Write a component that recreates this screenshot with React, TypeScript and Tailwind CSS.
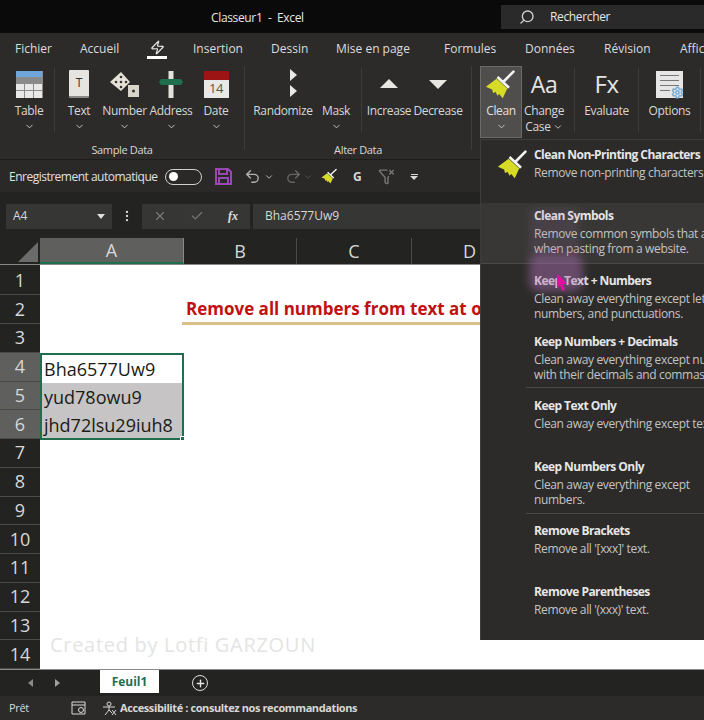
import type { ReactNode } from "react"
import { Search, ChevronDown, Undo2, Redo2, X, Check, Plus, MoreVertical, Zap, FilterX, Settings } from "lucide-react"

const tabs = [
  { label: "Fichier", w: "w-[65px]" },
  { label: "Accueil", w: "w-[67px]" },
]

const tabsAfter = [
  { label: "Insertion", w: "w-[78px]" },
  { label: "Dessin", w: "w-[65px]" },
  { label: "Mise en page", w: "w-[108px]" },
  { label: "Formules", w: "w-[81px]" },
  { label: "Données", w: "w-[79px]" },
  { label: "Révision", w: "w-[76px]" },
  { label: "Affichage", w: "w-[70px]" },
]

function Broom({ size = 36 }: { size?: number }) {
  return (
    <svg width={size} height={size} viewBox="0 0 36 36">
      <path d="M21 14 L32 3" stroke="#f2f2f2" strokeWidth="3" strokeLinecap="round" />
      <path d="M14 9 L27 21" stroke="#f2f2f2" strokeWidth="3" />
      <path d="M13 11 L25 22 L20 33 L16 28 L14 30 L12 26 L9 27 L8 23 L1 20 Z" fill="#d6dc26" />
    </svg>
  )
}

function RibbonItem({ label, icon, w, chevron = true }: { label: string; icon: ReactNode; w: string; chevron?: boolean }) {
  return (
    <div className={`flex flex-col items-center shrink-0 ${w}`}>
      <div className="h-[36px] flex items-center justify-center">{icon}</div>
      <div className="mt-px text-[12px] leading-[16px] text-[#d8d8d8] whitespace-nowrap">{label}</div>
      {chevron && <ChevronDown size={11} strokeWidth={2} className="mt-[2px] text-[#cfcfcf]" />}
    </div>
  )
}

function MenuEntry({ title, lines }: { title: string; lines: string[] }) {
  return (
    <div className="pl-[53px] whitespace-nowrap">
      <div className="text-[12px] leading-[16px] font-bold tracking-[-0.55px] text-[#e6e6e6]">{title}</div>
      <div className="mt-[2px]">
        {lines.map((l) => (
          <div key={l} className="text-[12px] leading-[15px] text-[#c4c4c4]">{l}</div>
        ))}
      </div>
    </div>
  )
}

export default function App() {
  const rows = [1, 2, 3, 4, 5, 6, 7, 8, 9, 10, 11, 12, 13, 14]
  return (
    <div className="w-[704px] h-[720px] overflow-hidden relative flex flex-col bg-[#2c2b2a] tracking-[-0.35px] font-['Open_Sans','Noto_Sans',sans-serif]">
      {/* title bar */}
      <div className="h-[33px] bg-[#0a0a0a] flex shrink-0 text-[12px] text-[#e6e6e6]">
        <div className="ml-[211px] w-[290px] leading-[35px]">Classeur1&nbsp; -&nbsp; Excel</div>
        <div className="mt-[5px] h-[24px] flex-1 bg-[#2a2a2a] flex items-center">
          <Search size={16} className="ml-[18px] -scale-x-100 text-[#d0d0d0]" />
          <span className="ml-[15px]">Rechercher</span>
        </div>
      </div>

      {/* tabs */}
      <div className="h-[32px] pl-[15px] flex items-center text-[12px] tracking-normal text-[#dcdcdc] whitespace-nowrap shrink-0">
        {tabs.map((t) => (
          <div key={t.label} className={`shrink-0 ${t.w}`}>{t.label}</div>
        ))}
        <div className="w-[46px] shrink-0">
          <div className="w-[20px] flex flex-col items-center">
            <Zap size={15} className="text-[#e8e8e8]" />
            <div className="w-[20px] h-[3px] bg-white mt-px" />
          </div>
        </div>
        {tabsAfter.map((t) => (
          <div key={t.label} className={`shrink-0 ${t.w}`}>{t.label}</div>
        ))}
      </div>

      {/* ribbon */}
      <div className="h-[94px] flex shrink-0 pt-px">
        <div className="flex flex-col shrink-0 w-[244px]">
          <div className="flex items-start h-[70px]">
            <RibbonItem
              w="w-[50px] ml-[4px]"
              label="Table"
              icon={
                <div className="w-[27px] h-[27px] grid grid-cols-3 gap-px bg-[#8a8a8a]">
                  <div className="col-span-3 h-[6px] bg-[#6ea6dc]" />
                  {[0, 1, 2, 3, 4, 5].map((i) => <div key={i} className="bg-[#e8e8e8]" />)}
                </div>
              }
            />
            <div className="w-px h-[64px] bg-[#3d3c3b] mt-[2px] shrink-0" />
            <RibbonItem
              w="w-[48px]"
              label="Text"
              icon={
                <div className="w-[20px] h-[28px] bg-[#e6e4e0] border-b-2 border-[#8a8a8a] rounded-[1px] flex items-center justify-center text-[12px] text-[#333]">T</div>
              }
            />
            <RibbonItem
              w="w-[43px]"
              label="Number"
              icon={
                <svg width="32" height="28" viewBox="0 0 32 28">
                  <path d="M12 2 L21 12 L12 21 L1 12 Z" fill="#e6e2d8" />
                  <path d="M19 15 H30 V27 H19 Z" fill="#d8d4ca" />
                  <circle cx="12" cy="7" r="1.3" fill="#333" />
                  <circle cx="7" cy="12" r="1.3" fill="#333" />
                  <circle cx="12" cy="12" r="1.3" fill="#333" />
                  <circle cx="17" cy="12" r="1.3" fill="#333" />
                  <circle cx="12" cy="17" r="1.3" fill="#333" />
                  <circle cx="24.5" cy="21" r="1.5" fill="#333" />
                </svg>
              }
            />
            <RibbonItem
              w="w-[50px]"
              label="Address"
              icon={
                <svg width="26" height="28" viewBox="0 0 26 28">
                  <rect x="10.5" y="1" width="5" height="27" fill="#e4e2dc" />
                  <path d="M3 9 H23 L25 12 L23 15 H3 L1 12 Z" fill="#1f6f4f" />
                </svg>
              }
            />
            <RibbonItem
              w="w-[40px]"
              label="Date"
              icon={
                <div className="w-[25px] h-[27px] bg-[#e8e8e8] flex flex-col items-center">
                  <div className="w-full h-[9px] bg-[#9c1414]" />
                  <div className="text-[13px] leading-[17px] text-[#555]">14</div>
                </div>
              }
            />
          </div>
          <div className="mt-[7px] text-center text-[11px] leading-[14px] text-[#d8d8d8]">Sample Data</div>
        </div>
        <div className="w-px h-[84px] bg-[#3d3c3b] shrink-0" />
        <div className="flex flex-col shrink-0 w-[226px]">
          <div className="flex items-start h-[70px]">
            <RibbonItem
              w="w-[64px] ml-[6px]"
              label="Randomize"
              chevron={false}
              icon={
                <svg className="ml-[20px]" width="10" height="33" viewBox="0 0 10 33">
                  <path d="M2 1 L9 7 L2 13 Z M2 17 L9 23 L2 29 Z" fill="#e8e8e8" />
                </svg>
              }
            />
            <RibbonItem w="w-[42px]" label="Mask" icon={<div />} />
            <div className="w-px h-[64px] bg-[#3d3c3b] ml-[4px] mt-[2px] shrink-0" />
            <RibbonItem
              w="w-[54px]"
              label="Increase"
              chevron={false}
              icon={<svg width="20" height="12" viewBox="0 0 20 12"><path d="M10 1 L19 10 H1 Z" fill="#e8e6e0" /></svg>}
            />
            <RibbonItem
              w="w-[44px]"
              label="Decrease"
              chevron={false}
              icon={<svg width="20" height="12" viewBox="0 0 20 12"><path d="M1 2 H19 L10 11 Z" fill="#e8e6e0" /></svg>}
            />
          </div>
          <div className="mt-[7px] text-center text-[11px] leading-[14px] text-[#d8d8d8]">Alter Data</div>
        </div>
        <div className="w-px h-[84px] bg-[#3d3c3b] shrink-0" />
        <div className="flex items-start shrink-0 ml-[8px]">
          <div className="w-[42px] h-[72px] bg-[#4f4e4c] border border-[#6a6a68] flex flex-col items-center">
            <div className="h-[35px] flex items-center justify-center"><Broom size={32} /></div>
            <div className="mt-px text-[12px] leading-[16px] text-[#e0e0e0]">Clean</div>
            <ChevronDown size={11} className="mt-[2px] text-[#cfcfcf]" />
          </div>
          <div className="w-[44px] shrink-0 flex flex-col items-center">
            <div className="h-[36px] flex items-center text-[23px] text-[#e4e4e4]">Aa</div>
            <div className="mt-px text-[12px] leading-[16px] text-[#d8d8d8] text-center">Change</div>
            <div className="text-[12px] leading-[15px] text-[#d8d8d8] flex items-center">Case<ChevronDown size={10} className="ml-[2px]" /></div>
          </div>
          <div className="w-px h-[64px] ml-[8px] mt-[2px] bg-[#3d3c3b] shrink-0" />
          <div className="w-[63px] shrink-0 flex flex-col items-center">
            <div className="h-[36px] flex items-center text-[24px] text-[#e4e4e4]">Fx</div>
            <div className="mt-px text-[12px] leading-[16px] text-[#d8d8d8]">Evaluate</div>
          </div>
          <div className="w-px h-[64px] mt-[2px] bg-[#3d3c3b] shrink-0" />
          <div className="w-[61px] shrink-0 flex flex-col items-center">
            <div className="h-[36px] flex items-center">
              <div className="w-[27px] h-[27px] bg-[#e6e6e6] relative flex flex-col gap-[4px] p-[4px]">
                <div className="h-px bg-[#777]" />
                <div className="h-px bg-[#777]" />
                <div className="h-px bg-[#777]" />
                <div className="h-px w-[10px] bg-[#777]" />
                <Settings size={13} strokeWidth={3} className="absolute -right-px -bottom-px text-[#7fb0d6]" />
              </div>
            </div>
            <div className="mt-px text-[12px] leading-[16px] text-[#d8d8d8]">Options</div>
          </div>
          <div className="w-px h-[64px] mt-[2px] bg-[#3d3c3b] shrink-0" />
        </div>
      </div>

      {/* quick access */}
      <div className="h-[33px] pt-px bg-[#2a2928] flex items-center shrink-0 text-[12px] text-[#e0e0e0] border-t border-[#1d1d1c]">
        <span className="ml-[9px] w-[156px] shrink-0 whitespace-nowrap tracking-[-0.5px]">Enregistrement automatique</span>
        <div className="w-[37px] h-[16px] shrink-0 rounded-full border border-[#d0d0d0] flex items-center pl-[3px]">
          <div className="w-[9px] h-[9px] rounded-full bg-white" />
        </div>
        <svg className="ml-[13px] shrink-0" width="17" height="17" viewBox="0 0 17 17" fill="none" stroke="#9a48b4" strokeWidth="2">
          <path d="M1 1 H13 L16 4 V16 H1 Z M4 1 V6 H12 V1 M4 16 V10 H13 V16" />
        </svg>
        <Undo2 size={17} className="ml-[12px] shrink-0 text-[#b0b0b0]" />
        <ChevronDown size={10} className="ml-[3px] shrink-0 text-[#cfcfcf]" />
        <Redo2 size={17} className="ml-[11px] shrink-0 text-[#666]" />
        <ChevronDown size={10} className="ml-[1px] shrink-0 text-[#555]" />
        <div className="ml-[8px] w-[17px] h-[17px] shrink-0 flex items-center justify-center"><Broom size={17} /></div>
        <span className="ml-[15px] w-[10px] shrink-0 font-bold text-[#d8d8d8]">G</span>
        <FilterX size={17} className="ml-[15px] shrink-0 text-[#777]" />
        <div className="ml-[15px] shrink-0 w-[8px] flex flex-col items-center gap-px">
          <div className="w-[7px] h-px bg-[#d8d8d8]" />
          <svg width="8" height="4" viewBox="0 0 8 4"><path d="M0 0 H8 L4 4 Z" fill="#d8d8d8" /></svg>
        </div>
      </div>

      {/* formula bar */}
      <div className="h-[46px] pt-[2px] bg-[#232322] flex items-center shrink-0 text-[12px] tracking-normal text-[#d8d8d8]">
        <div className="ml-[6px] w-[106px] h-[25px] bg-[#363635] flex items-center justify-between px-[7px] shrink-0">
          <span>A4</span>
          <svg width="8" height="5" viewBox="0 0 8 5"><path d="M0 0 H8 L4 5 Z" fill="#e0e0e0" /></svg>
        </div>
        <MoreVertical size={14} className="ml-[8px] text-[#d8d8d8] shrink-0" />
        <div className="ml-[8px] w-[108px] h-[25px] bg-[#363635] flex items-center shrink-0">
          <X size={14} className="ml-[11px] text-[#777]" />
          <Check size={14} className="ml-[23px] text-[#777]" />
          <span className="ml-[24px] italic font-['Liberation_Serif',serif] font-bold text-[#e0e0e0]">fx</span>
        </div>
        <div className="ml-[3px] flex-1 h-[25px] bg-[#363635] flex items-center pl-[12px]">Bha6577Uw9</div>
      </div>

      {/* column header */}
      <div className="h-[27px] bg-[#232322] flex shrink-0 text-[18px] tracking-normal text-[#d8d8d8] border-b border-[#8a8a8a]">
        <div className="w-[40px] relative shrink-0">
          <div className="absolute right-[2px] bottom-[2px] w-0 h-0 border-l-[20px] border-l-transparent border-b-[20px] border-b-[#6b6b6b]" />
        </div>
        <div className="w-[144px] bg-[#5f5f5e] flex items-center justify-center border-b-2 border-[#1f6f4f] border-r border-r-[#8a8a8a]">A</div>
        <div className="w-[113px] flex items-center justify-center border-r border-[#4a4a49]">B</div>
        <div className="w-[115px] flex items-center justify-center border-r border-[#4a4a49]">C</div>
        <div className="w-[115px] flex items-center justify-center">D</div>
      </div>

      {/* grid */}
      <div className="h-[404px] flex shrink-0 tracking-normal">
        <div className="w-[40px] bg-[#232322] shrink-0 flex flex-col pt-[1.5px] text-[18px] text-[#d8d8d8]">
          {rows.map((r) => (
            <div
              key={r}
              className={`h-[28.75px] flex items-center justify-center border-b border-[#4a4a49] ${r >= 4 && r <= 6 ? "bg-[#5f5f5e]" : ""}`}
            >
              {r}
            </div>
          ))}
        </div>
        <div className="flex-1 bg-white relative text-[18px] leading-[28px] text-[#1a1a1a]">
          <div className="absolute left-[142px] top-[30px] h-[30px] pl-[4px] pr-[20px] whitespace-nowrap border-b-[3px] border-[#dcc08a] text-[17px] leading-[28px] font-bold text-[#c01010]">
            Remove all numbers from text at once
          </div>
          <div className="absolute left-0 top-[88px] w-[144px] h-[87px] border-2 border-[#1f6f4f] flex flex-col">
            <div className="h-[28px] pl-[2px]">Bha6577Uw9</div>
            <div className="h-[28px] pl-[2px] bg-[#c6c4c4]">yud78owu9</div>
            <div className="h-[27px] pl-[2px] bg-[#c6c4c4] whitespace-nowrap">jhd72lsu29iuh8</div>
            <div className="absolute -right-[3px] -bottom-[3px] w-[5px] h-[5px] bg-[#1f6f4f] border border-white" />
          </div>
          <div className="absolute left-[10px] top-[366px] text-[20px] leading-[28px] tracking-[0.7px] text-[#e4e4e4] whitespace-nowrap">Created by Lotfi GARZOUN</div>
        </div>
      </div>

      {/* sheet tabs */}
      <div className="h-[27px] bg-[#232322] flex items-center shrink-0 text-[#d8d8d8] border-t border-[#8a8a8a]">
        <svg className="ml-[28px] shrink-0" width="5" height="8" viewBox="0 0 5 8"><path d="M5 0 V8 L0 4 Z" fill="#8a8a8a" /></svg>
        <svg className="ml-[22px] shrink-0" width="5" height="8" viewBox="0 0 5 8"><path d="M0 0 V8 L5 4 Z" fill="#a0a0a0" /></svg>
        <div className="ml-[40px] w-[59px] h-[23px] -mt-[3px] shrink-0 bg-white flex items-center justify-center text-[12px] tracking-normal font-bold text-[#1f6f4f]">Feuil1</div>
        <div className="ml-[33px] w-[16px] h-[16px] shrink-0 rounded-full border border-[#e0e0e0] flex items-center justify-center">
          <Plus size={11} strokeWidth={3} className="text-[#e8e8e8]" />
        </div>
      </div>

      {/* status bar */}
      <div className="flex-1 flex items-center text-[11px] text-[#d8d8d8] whitespace-nowrap">
        <span className="ml-[9px] w-[19px] shrink-0">Prêt</span>
        <svg className="ml-[43px] shrink-0" width="15" height="14" viewBox="0 0 15 14" fill="none" stroke="#d8d8d8">
          <path d="M1 1 H14 V13 H1 Z M1 4 H14" />
          <circle cx="10" cy="9" r="2.5" />
        </svg>
        <svg className="ml-[16px] shrink-0" width="15" height="15" viewBox="0 0 15 15" fill="none" stroke="#d8d8d8">
          <circle cx="7" cy="3" r="2" />
          <path d="M1 6 H13 M7 6 V9 L3 14 M7 9 L10 12 M10 9 L14 14 M14 9 L10 14" />
        </svg>
        <span className="ml-[3px] font-bold tracking-[-0.4px]">Accessibilité : consultez nos recommandations</span>
      </div>

      {/* clean menu */}
      <div className="absolute left-[480px] top-[139px] w-[224px] h-[501px] bg-[#2c2b29] border-l border-t border-[#3d3c3b]">
        <div className="h-[63px] pt-[7px] relative">
          <div className="absolute left-[16px] top-[9px]"><Broom size={32} /></div>
          <MenuEntry title="Clean Non-Printing Characters" lines={["Remove non-printing characters"]} />
        </div>
        <div className="h-[61px] pt-[5px] bg-[#383735] border-b border-[#4a4947]">
          <MenuEntry title="Clean Symbols" lines={["Remove common symbols that appear", "when pasting from a website."]} />
        </div>
        <div className="h-[61px] pt-[9px]">
          <MenuEntry title="Keep Text + Numbers" lines={["Clean away everything except letters,", "numbers, and punctuations."]} />
        </div>
        <div className="h-[63px] pt-[9px] relative">
          <MenuEntry title="Keep Numbers + Decimals" lines={["Clean away everything except numbers", "with their decimals and commas."]} />
          <div className="absolute left-[45px] right-0 bottom-0 h-px bg-[#4a4947]" />
        </div>
        <div className="h-[61px] pt-[10px]">
          <MenuEntry title="Keep Text Only" lines={["Clean away everything except text."]} />
        </div>
        <div className="h-[65px] pt-[10px] relative">
          <MenuEntry title="Keep Numbers Only" lines={["Clean away everything except", "numbers."]} />
          <div className="absolute left-[45px] right-0 bottom-0 h-px bg-[#4a4947]" />
        </div>
        <div className="h-[61px] pt-[9px]">
          <MenuEntry title="Remove Brackets" lines={["Remove all '[xxx]' text."]} />
        </div>
        <div className="h-[65px] pt-[9px]">
          <MenuEntry title="Remove Parentheses" lines={["Remove all '(xxx)' text."]} />
        </div>
        {/* mouse highlight and cursor */}
        <div className="absolute left-[48px] top-[68px] w-[50px] h-[48px] bg-[#a878b0]/15 blur-[4px]" />
        <div className="absolute left-[48px] top-[114px] w-[54px] h-[38px] rounded-[10px] bg-[#b070b8]/45 blur-[4px]" />
        <svg className="absolute left-[75px] top-[133px]" width="12" height="18" viewBox="0 0 12 18">
          <path d="M1 0 L11 11 H7 L9 17 L6 18 L4 12 L1 15 Z" fill="#e010a0" />
        </svg>
      </div>
    </div>
  )
}
